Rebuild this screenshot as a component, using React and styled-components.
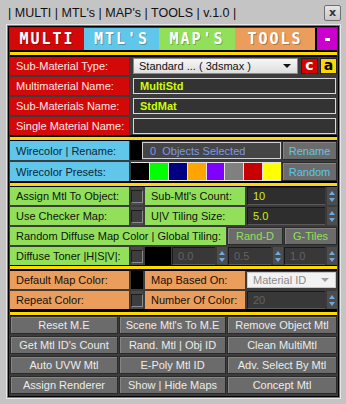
import React from 'react';
import styled, { createGlobalStyle } from 'styled-components';

const GlobalStyle = createGlobalStyle`
  html, body {
    margin: 0;
    padding: 0;
    background: #c4c4c4;
  }
  * {
    box-sizing: border-box;
  }
`;

const UI_FONT = "'Liberation Sans', Arial, sans-serif";

const Window = styled.div`
  width: 346px;
  height: 404px;
  background: #c4c4c4;
  display: flex;
  flex-direction: column;
  padding: 0 6px 0 7px;
  font-family: ${UI_FONT};
  overflow: hidden;
`;

const TitleBar = styled.div`
  height: 25px;
  display: flex;
  align-items: center;
  justify-content: space-between;
  padding-left: 1px;
  font-size: 12.5px;
  color: #111;
`;

const CloseButton = styled.div`
  width: 17px;
  height: 16px;
  margin-right: -1px;
  border: 1px solid #6e6e6e;
  border-radius: 2px;
  background: linear-gradient(#e6e6e6, #c8c8c8);
  display: flex;
  align-items: center;
  justify-content: center;
  font-family: 'DejaVu Sans', sans-serif;
  font-size: 11px;
  font-weight: bold;
  color: #333;
  line-height: 1;
`;

const Frame = styled.div`
  border: 1px solid #7a7a7a;
  box-shadow: 0 0 0 1px #e8e8e8;
`;

const Panel = styled.div`
  background: #3c3c3c;
  border: 1px solid #000;
  padding: 1px 1px 2px 1px;
  display: flex;
  flex-direction: column;
`;

const TabRow = styled.div`
  display: flex;
  height: 22px;
  background: #000;
`;

const Tab = styled.div`
  width: ${p => p.w}px;
  margin-left: ${p => p.gap || 0}px;
  background: ${p => p.bg};
  display: flex;
  align-items: center;
  justify-content: center;
  color: #fff;
  font-family: 'DejaVu Sans Mono', monospace;
  font-weight: bold;
  font-size: 15px;
  letter-spacing: 2px;
  text-shadow: 1px 1px 0 rgba(0, 0, 0, 0.25);
`;

const Dash = styled.span`
  width: 5px;
  height: 3px;
  background: #fff;
`;

const Separator = styled.div`
  height: ${p => 3 + (p.top ?? 2) + (p.bottom ?? 1)}px;
  background: #ffd800;
  border-top: ${p => p.top ?? 2}px solid #000;
  border-bottom: ${p => p.bottom ?? 1}px solid #000;
`;

const Section = styled.div`
  display: flex;
  flex-direction: column;
  gap: 2px;
`;

const Row = styled.div`
  display: flex;
  height: ${p => p.h || 18}px;
`;

const Label = styled.div`
  width: ${p => p.w}px;
  margin-right: ${p => p.mr ?? 2}px;
  flex-shrink: 0;
  background: ${p => p.bg};
  color: ${p => p.fg || '#111'};
  font-size: 11px;
  display: flex;
  align-items: center;
  padding-left: 6px;
  white-space: nowrap;
  overflow: hidden;
`;

const TextField = styled.div`
  flex: 1;
  background: #333;
  border: 1px solid #d8d8d8;
  margin: 1px 1px 1px 2px;
  color: ${p => p.fg || '#ccff00'};
  font-weight: ${p => (p.bold ? 'bold' : 'normal')};
  font-size: 11px;
  display: flex;
  align-items: center;
  padding-left: 6px;
`;

const Dropdown = styled.div`
  width: ${p => p.w}px;
  margin: 1px 3px 1px 0;
  flex-shrink: 0;
  background: ${p => (p.light ? '#f2f2f2' : 'linear-gradient(#f6f6f6, #dedede)')};
  border: 1px solid ${p => (p.light ? '#c8c8c8' : '#8a8a8a')};
  color: ${p => (p.light ? '#8a8a8a' : '#111')};
  font-size: 11px;
  display: flex;
  align-items: center;
  justify-content: space-between;
  padding: 0 6px 0 5px;
  white-space: nowrap;
`;

const Arrow = styled.span`
  width: 0;
  height: 0;
  border-left: 4px solid transparent;
  border-right: 4px solid transparent;
  border-top: 4px solid ${p => p.color || '#111'};
`;

const LetterButton = styled.div`
  width: 17px;
  margin: 1px 0 1px ${p => p.ml || 0}px;
  background: ${p => p.bg};
  color: ${p => p.fg};
  border: 1px solid #222;
  font-family: 'DejaVu Sans', sans-serif;
  font-weight: bold;
  font-size: 14px;
  display: flex;
  align-items: center;
  justify-content: center;
  padding-bottom: 2px;
`;

const Swatch = styled.div`
  width: ${p => p.w}px;
  margin-right: ${p => p.mr ?? 0}px;
  flex-shrink: 0;
  background: ${p => p.color};
`;

const SwatchStrip = styled.div`
  width: 151px;
  margin: 0 1px 0 1px;
  display: flex;
  gap: 1px;
  background: #e2e2e2;
  padding: 1px 0;
`;

const PresetSwatch = styled.div`
  flex: 1;
  background: ${p => p.color};
`;

const FieldBox = styled.div`
  width: ${p => p.w}px;
  margin: 1px 0;
  flex-shrink: 0;
  background: #454545;
  border: 1px solid #d0d0d0;
  color: #7c98e8;
  font-size: 11px;
  display: flex;
  align-items: center;
  padding-left: 7px;
  white-space: nowrap;
`;

const GrayButton = styled.div`
  width: ${p => p.w}px;
  margin-left: ${p => p.ml ?? 1}px;
  flex-shrink: 0;
  background: #6b6b6b;
  border: 1px solid #2a2a2a;
  box-shadow: inset 1px 1px 0 #858585;
  color: ${p => p.fg || '#e4e4e4'};
  font-size: 11px;
  display: flex;
  align-items: center;
  justify-content: center;
  white-space: nowrap;
`;

const CheckCell = styled.div`
  width: 12px;
  margin-right: 2px;
  flex-shrink: 0;
  background: #4a4a4a;
  display: flex;
  align-items: center;
  justify-content: center;
`;

const CheckBox = styled.div`
  width: 12px;
  height: 13px;
  background: #3e3e3e;
  border-top: 1px solid #1c1c1c;
  border-left: 1px solid #1c1c1c;
  border-right: 1px solid #8a8a8a;
  border-bottom: 1px solid #8a8a8a;
`;

const Spinner = styled.div`
  width: ${p => p.w}px;
  margin-left: ${p => p.ml ?? 0}px;
  flex-shrink: 0;
  display: flex;
  background: #3a3a3a;
`;

const SpinField = styled.div`
  flex: 1;
  background: ${p => (p.disabled ? '#383838' : '#2e2e2e')};
  border-top: 1px solid #1a1a1a;
  border-left: 1px solid #1a1a1a;
  border-bottom: 1px solid #5a5a5a;
  color: ${p => (p.disabled ? '#626262' : '#ccf000')};
  font-size: 11px;
  display: flex;
  align-items: center;
  padding-left: 5px;
`;

const SpinArrows = styled.div`
  width: 10px;
  margin-left: 2px;
  background: #4c4c4c;
  display: flex;
  flex-direction: column;
  align-items: center;
  justify-content: space-around;
  padding: 2px 0;
`;

const Tri = styled.span`
  width: 0;
  height: 0;
  border-left: 3px solid transparent;
  border-right: 3px solid transparent;
  ${p => (p.up ? 'border-bottom' : 'border-top')}: 4px solid #6fa8dc;
`;

const ButtonGrid = styled.div`
  display: grid;
  grid-template-columns: 108px 107px 1fr;
  column-gap: 1px;
  row-gap: 2px;
  grid-auto-rows: 18px;
`;

const ToolButton = styled.div`
  background: #6b6b6b;
  border: 1px solid #2a2a2a;
  box-shadow: inset 1px 1px 0 #858585;
  color: #ececec;
  font-size: 11px;
  display: flex;
  align-items: center;
  justify-content: center;
  white-space: nowrap;
`;

const SpinBox = ({ w, ml, value, disabled }) => (
  <Spinner w={w} ml={ml}>
    <SpinField disabled={disabled}>{value}</SpinField>
    <SpinArrows>
      <Tri up />
      <Tri />
    </SpinArrows>
  </Spinner>
);

const Check = () => (
  <CheckCell>
    <CheckBox />
  </CheckCell>
);

const RED = '#d30808';
const BLUE = '#60c6ea';
const GREEN = '#92e05a';
const ORANGE = '#eb9e5c';

const presets = ['#000000', '#00ff00', '#000080', '#ffa500', '#7f00ff', '#808080', '#c80000', '#ffff00'];

const tools = [
  'Reset M.E', "Scene Mtl's To M.E", 'Remove Object Mtl',
  "Get Mtl ID's Count", 'Rand. Mtl | Obj ID', 'Clean MultiMtl',
  'Auto UVW Mtl', 'E-Poly Mtl ID', 'Adv. Select By Mtl',
  'Assign Renderer', 'Show | Hide Maps', 'Concept Mtl',
];

export default function App() {
  return (
    <>
      <GlobalStyle />
      <Window>
        <TitleBar>
          <span>| MULTI | MTL's | MAP's | TOOLS | v.1.0 |</span>
          <CloseButton>x</CloseButton>
        </TitleBar>
        <Frame>
          <Panel>
            <TabRow>
              <Tab w={74} bg={RED}>MULTI</Tab>
              <Tab w={75} bg={BLUE}>MTL'S</Tab>
              <Tab w={76} bg={GREEN}>MAP'S</Tab>
              <Tab w={80} bg={ORANGE}>TOOLS</Tab>
              <Tab w={20} gap={2} bg="#cc00cc"><Dash /></Tab>
            </TabRow>
            <Separator top={2} bottom={2} />

            <Section>
              <Row>
                <Label w={119} mr={4} bg={RED} fg="#ffe8e8">Sub-Material Type:</Label>
                <Dropdown w={165}>
                  <span>Standard ... ( 3dsmax )</span>
                  <Arrow />
                </Dropdown>
                <LetterButton bg="#d40000" fg="#fff">c</LetterButton>
                <LetterButton ml={2} bg="#ffd800" fg="#000">a</LetterButton>
              </Row>
              <Row>
                <Label w={119} mr={2} bg={RED} fg="#ffe8e8">Multimaterial Name:</Label>
                <TextField bold>MultiStd</TextField>
              </Row>
              <Row>
                <Label w={119} mr={2} bg={RED} fg="#ffe8e8">Sub-Materials Name:</Label>
                <TextField bold>StdMat</TextField>
              </Row>
              <Row>
                <Label w={119} mr={2} bg={RED} fg="#ffe8e8">Single Material Name:</Label>
                <TextField />
              </Row>
            </Section>
            <Separator />

            <Section>
              <Row h={19}>
                <Label w={119} mr={1} bg={BLUE} fg="#0c2635">Wirecolor | Rename:</Label>
                <Swatch w={12} color="#000" />
                <FieldBox w={139}>0&nbsp;&nbsp;Objects Selected</FieldBox>
                <GrayButton w={55} ml={1} fg="#5cc6ea">Rename</GrayButton>
              </Row>
              <Row h={19}>
                <Label w={119} mr={1} bg={BLUE} fg="#0c2635">Wirecolor Presets:</Label>
                <SwatchStrip>
                  {presets.map(c => (
                    <PresetSwatch key={c} color={c} />
                  ))}
                </SwatchStrip>
                <GrayButton w={55} ml={0} fg="#5cc6ea">Random</GrayButton>
              </Row>
            </Section>
            <Separator />

            <Section>
              <Row>
                <Label w={119} bg={GREEN}>Assign Mtl To Object:</Label>
                <Check />
                <Label w={100} bg={GREEN}>Sub-Mtl's Count:</Label>
                <SpinBox w={90} value="10" />
              </Row>
              <Row>
                <Label w={119} bg={GREEN}>Use Checker Map:</Label>
                <Check />
                <Label w={100} bg={GREEN}>U|V Tiling Size:</Label>
                <SpinBox w={90} value="5.0" />
              </Row>
              <Row>
                <Label w={216} mr={0} bg={GREEN}>Random Diffuse Map Color | Global Tiling:</Label>
                <GrayButton w={56} ml={1} fg="#8fe05a">Rand-D</GrayButton>
                <GrayButton w={53} ml={1} fg="#8fe05a">G-Tiles</GrayButton>
              </Row>
              <Row>
                <Label w={119} bg={GREEN}>Diffuse Toner |H|S|V|:</Label>
                <Check />
                <Swatch w={26} mr={1} color="#000" />
                <SpinBox w={55} value="0.0" disabled />
                <SpinBox w={55} ml={1} value="0.5" disabled />
                <SpinBox w={53} ml={1} value="1.0" disabled />
              </Row>
            </Section>
            <Separator top={1} bottom={2} />

            <Section>
              <Row>
                <Label w={119} bg={ORANGE}>Default Map Color:</Label>
                <Swatch w={12} mr={2} color="#000" />
                <Label w={100} bg={ORANGE}>Map Based On:</Label>
                <Dropdown w={89} light>
                  <span>Material ID</span>
                  <Arrow color="#a0a0a0" />
                </Dropdown>
              </Row>
              <Row>
                <Label w={119} bg={ORANGE}>Repeat Color:</Label>
                <Check />
                <Label w={100} bg={ORANGE}>Number Of Color:</Label>
                <SpinBox w={90} value="20" disabled />
              </Row>
            </Section>
            <Separator top={3} bottom={1} />

            <ButtonGrid>
              {tools.map(t => (
                <ToolButton key={t}>{t}</ToolButton>
              ))}
            </ButtonGrid>
          </Panel>
        </Frame>
      </Window>
    </>
  );
}
